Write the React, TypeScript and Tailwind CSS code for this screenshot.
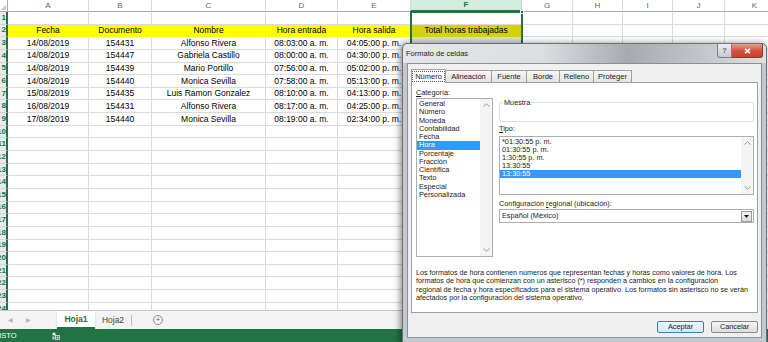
import React from "react";

const COLS = ["A", "B", "C", "D", "E", "F", "G", "H", "I", "J", "K"];

const HEAD = ["Fecha", "Documento", "Nombre", "Hora entrada", "Hora salida", "Total horas trabajadas"];

const DATA = [
  ["14/08/2019", "154431", "Alfonso Rivera", "08:03:00 a. m.", "04:05:00 p. m."],
  ["14/08/2019", "154447", "Gabriela Castillo", "08:00:00 a. m.", "04:30:00 p. m."],
  ["14/08/2019", "154439", "Mario Portillo", "07:56:00 a. m.", "05:02:00 p. m."],
  ["14/08/2019", "154440", "Monica Sevilla", "07:58:00 a. m.", "05:13:00 p. m."],
  ["15/08/2019", "154435", "Luis Ramon Gonzalez", "08:10:00 a. m.", "04:13:00 p. m."],
  ["16/08/2019", "154431", "Alfonso Rivera", "08:17:00 a. m.", "04:25:00 p. m."],
  ["17/08/2019", "154440", "Monica Sevilla", "08:19:00 a. m.", "02:34:00 p. m."],
];

const CATS = [
  "General",
  "Número",
  "Moneda",
  "Contabilidad",
  "Fecha",
  "Hora",
  "Porcentaje",
  "Fracción",
  "Científica",
  "Texto",
  "Especial",
  "Personalizada",
];

const TIPOS = ["*01:30:55 p. m.", "01:30:55 p. m.", "1:30:55 p. m.", "13:30:55", "13:30:55"];

const TABS = [
  { label: "Número", w: "w-[35px]" },
  { label: "Alineación", w: "w-[47px]" },
  { label: "Fuente", w: "w-[36px]" },
  { label: "Borde", w: "w-[34px]" },
  { label: "Relleno", w: "w-[35px]" },
  { label: "Proteger", w: "w-[39px]" },
];

const DESC = [
  "Los formatos de hora contienen números que representan fechas y horas como valores de hora. Los",
  "formatos de hora que comienzan con un asterisco (*) responden a cambios en la configuración",
  "regional de fecha y hora especificados para el sistema operativo. Los formatos sin asterisco no se verán",
  "afectados por la configuración del sistema operativo.",
];

const ROWS = Array.from({ length: 24 }, (_, i) => i + 1);

function cellText(row: number, col: number) {
  if (row === 2 && col <= 5) return HEAD[col];
  if (row >= 3 && row <= 9 && col <= 4) return DATA[row - 3][col];
  return "";
}

function cellClass(row: number, col: number) {
  if (row === 2 && col <= 4) return "bg-[#ffff00] border-[#ffff00]";
  if (row === 2 && col === 5) return "bg-[#d4d20e] border-[#d4d20e]";
  if (col === 5 && row >= 3) return "bg-[#dcdcdc] border-[#cdcdcd]";
  return "bg-white border-[#dadada]";
}

function UpArrow() {
  return (
    <svg width="7" height="4" viewBox="0 0 7 4">
      <path d="M0.5 3.5 L3.5 0.8 L6.5 3.5" stroke="#9a9a9a" strokeWidth="1" fill="none" />
    </svg>
  );
}

function DownArrow() {
  return (
    <svg width="7" height="4" viewBox="0 0 7 4">
      <path d="M0.5 0.5 L3.5 3.2 L6.5 0.5" stroke="#9a9a9a" strokeWidth="1" fill="none" />
    </svg>
  );
}

function Scrollbar() {
  return (
    <div className="w-[12px] bg-[#f4f4f4] flex flex-col items-center justify-between py-[4px]">
      <UpArrow />
      <DownArrow />
    </div>
  );
}

function Sheet() {
  return (
    <div className="relative flex-1 overflow-hidden bg-white">
      <div className="grid grid-cols-[8px_81px_63px_114px_72px_73px_111px_51px_50px_50px_52px_60px] grid-rows-[12px_repeat(24,12.65px)]">
        <div className="relative border-r border-b border-[#ababab] bg-white">
          <div className="absolute right-[1px] bottom-[1px] w-0 h-0 border-l-[5px] border-l-transparent border-b-[5px] border-b-[#c8c8c8]" />
        </div>
        {COLS.map((c, i) =>
          i === 5 ? (
            <div
              key={c}
              className="flex items-center justify-center bg-[#d3eddc] border-b-2 border-b-[#217346] border-r border-r-[#c8c8c8] text-[8px] text-[#217346] font-bold"
            >
              {c}
            </div>
          ) : (
            <div
              key={c}
              className="flex items-center justify-center bg-white border-b border-b-[#ababab] border-r border-r-[#dadada] text-[8px] text-[#666]"
            >
              {c}
            </div>
          )
        )}
        {ROWS.map((r) => (
          <React.Fragment key={r}>
            <div className="flex items-center justify-end overflow-hidden bg-[#eaeaea] border-r-2 border-r-[#217346] border-b border-b-[#d4d4d4] text-[8px] font-bold text-[#217346] leading-none">
              {r}
            </div>
            {COLS.map((c, ci) => (
              <div
                key={c}
                className={`flex items-center justify-center whitespace-nowrap border-r border-b text-[8.5px] leading-none text-black ${cellClass(r, ci)}`}
              >
                {cellText(r, ci)}
              </div>
            ))}
          </React.Fragment>
        ))}
      </div>
      <div className="absolute left-[410px] top-[11px] w-[113px] h-[320px] border-2 border-[#217346] pointer-events-none" />
      <div className="absolute left-[520px] top-[10px] w-[4px] h-[4px] bg-[#217346] border border-white" />
    </div>
  );
}

function SheetTabs() {
  return (
    <div className="h-[19px] flex items-stretch bg-[#f3f3f3] border-t border-[#c6c6c6]">
      <div className="w-[57px] flex items-center gap-[13px] pl-[8px] text-[6px] text-[#b5b5b5]">
        <span>◀</span>
        <span>▶</span>
      </div>
      <div className="w-[38px] flex items-center justify-center bg-white border-b-2 border-[#217346] text-[8.5px] font-bold text-[#217346] shadow-[0_1px_2px_rgba(0,0,0,0.2)]">
        Hoja1
      </div>
      <div className="w-[37px] flex items-center justify-center text-[8.5px] text-[#444]">
        <span className="flex-1 text-center">Hoja2</span>
        <span className="w-px h-[11px] bg-[#bdbdbd]" />
      </div>
      <div className="flex items-center pl-[21px]">
        <div className="w-[10px] h-[10px] rounded-full border border-[#8a8a8a] flex items-center justify-center text-[8px] leading-none text-[#6a6a6a]">
          +
        </div>
      </div>
    </div>
  );
}

function StatusBar() {
  return (
    <div className="h-[13px] flex items-center bg-[#217346] text-white text-[7.5px] overflow-hidden">
      <span className="-ml-[5px] w-[57px]">LISTO</span>
      <svg width="8" height="8" viewBox="0 0 8 8">
        <circle cx="2" cy="2" r="1.6" fill="#ffffff" />
        <rect x="3.5" y="3.5" width="4" height="4" fill="none" stroke="#e6e6e6" strokeWidth="0.8" />
        <path d="M5.5 3.5 V7.5 M3.5 5.5 H7.5" stroke="#e6e6e6" strokeWidth="0.6" />
        <rect x="0.5" y="4.5" width="2" height="3" fill="#cfcfcf" />
      </svg>
    </div>
  );
}

function Dialog() {
  return (
    <div className="absolute left-[402px] top-[43px] w-[365px] h-[300px] flex flex-col rounded-t-[5px] border border-[#6d7075] bg-[#c4c9cf] shadow-[-2px_0_6px_rgba(0,0,0,0.45)]">
      <div className="h-[19px] flex items-start rounded-t-[5px] bg-[linear-gradient(90deg,#e4e6e8_0%,#dcdfe2_38%,#a7abb0_62%,#bfc3c7_80%,#dfe1e3_100%)]">
        <span className="pl-[3px] pt-[6px] text-[7.5px] leading-none text-[#1e1e1e]">Formato de celdas</span>
        <div className="ml-auto mr-[3px] flex">
          <div className="w-[15px] h-[14px] flex items-center justify-center rounded-bl-[3px] border border-t-0 border-[#7d8187] bg-[linear-gradient(#eceef0,#c6cacf)] text-[8px] font-bold text-[#6a6e73]">
            ?
          </div>
          <div className="w-[31px] h-[14px] flex items-center justify-center rounded-br-[3px] border border-t-0 border-l-0 border-[#8a3a30] bg-[linear-gradient(#e6a193,#d2543f_50%,#c7412c)]">
            <svg width="7" height="6" viewBox="0 0 7 6">
              <path d="M1 0.8 L6 5.2 M6 0.8 L1 5.2" stroke="#ffffff" strokeWidth="1.6" />
            </svg>
          </div>
        </div>
      </div>
      <div className="flex-1 mx-[4px] mb-[4px] bg-[#f0f0f0] border border-[#8b9097] px-[3px] pt-[5px] text-[7.3px] leading-none text-[#1a1a1a]">
        <div className="relative z-10 flex items-end h-[13px]">
          {TABS.map((t, i) =>
            i === 0 ? (
              <div
                key={t.label}
                className={`${t.w} h-[14px] -mb-px flex items-center justify-center bg-white border border-b-0 border-[#a0a0a0] text-[7.5px]`}
              >
                <span className="px-[2px] py-[1px] border border-dotted border-[#555]">{t.label}</span>
              </div>
            ) : (
              <div
                key={t.label}
                className={`${t.w} h-[12px] -ml-px flex items-center justify-center bg-[linear-gradient(#f6f6f6,#e3e3e3)] border border-b-0 border-[#a0a0a0] text-[7.5px]`}
              >
                {t.label}
              </div>
            )
          )}
        </div>
        <div className="h-[231px] bg-white border border-[#a0a0a0] pl-[4px] pt-[5px]">
          <div className="flex h-[169px]">
            <div className="w-[77px] flex flex-col">
              <div className="h-[10px] leading-[9px]">
                <u>C</u>ategoría:
              </div>
              <div className="h-[159px] flex border border-[#abadb3] bg-white">
                <div className="flex-1 pt-px">
                  {CATS.map((c) => (
                    <div
                      key={c}
                      className={`h-[8.27px] leading-[8.27px] pl-[2px] whitespace-nowrap ${c === "Hora" ? "bg-[#3399ff] text-white" : ""}`}
                    >
                      {c}
                    </div>
                  ))}
                </div>
                <Scrollbar />
              </div>
            </div>
            <div className="ml-[6px] w-[255px] flex flex-col">
              <fieldset className="mt-[10px] h-[24px] border border-[#d5dfe5] rounded-[3px] px-[3px]">
                <legend className="px-[1px] leading-[9px] text-[#1a1a1a]">Muestra</legend>
              </fieldset>
              <div className="mt-[2px] h-[9px] leading-[9px]">
                <u>T</u>ipo:
              </div>
              <div className="mt-[3px] h-[59px] flex border border-[#abadb3] bg-white">
                <div className="flex-1 pt-px">
                  {TIPOS.map((t, i) => (
                    <div
                      key={i}
                      className={`h-[8px] leading-[8px] pl-[2px] whitespace-nowrap ${i === 4 ? "bg-[#3399ff] text-white" : ""}`}
                    >
                      {t}
                    </div>
                  ))}
                </div>
                <Scrollbar />
              </div>
              <div className="mt-[4px] h-[9px] leading-[9px]">
                Configuración <u>r</u>egional (ubicación):
              </div>
              <div className="mt-px h-[14px] flex items-center border border-[#abadb3] bg-white pl-[2px] pr-px">
                <span className="flex-1">Español (México)</span>
                <div className="w-[11px] h-[11px] flex items-center justify-center border border-[#9a9a9a] bg-[linear-gradient(#f4f4f4,#dcdcdc)]">
                  <svg width="5" height="3" viewBox="0 0 5 3">
                    <path d="M0 0 H5 L2.5 3 Z" fill="#111" />
                  </svg>
                </div>
              </div>
            </div>
          </div>
          <div className="mt-[12px] text-[7.2px] leading-[8.27px]">
            {DESC.map((l) => (
              <div key={l} className="whitespace-nowrap">
                {l}
              </div>
            ))}
          </div>
        </div>
        <div className="mt-[8px] flex justify-end gap-[7px]">
          <div className="w-[47px] h-[12px] flex items-center justify-center rounded-[2px] border border-[#3c7fb1] bg-[linear-gradient(#f2f8fc,#d5e6f3)]">
            Aceptar
          </div>
          <div className="w-[47px] h-[12px] flex items-center justify-center rounded-[2px] border border-[#8a8a8a] bg-[linear-gradient(#f4f4f4,#dedede)]">
            Cancelar
          </div>
        </div>
      </div>
    </div>
  );
}

export default function App() {
  return (
    <div className="relative w-[768px] h-[342px] overflow-hidden flex flex-col bg-white font-['Liberation_Sans',Arial,sans-serif]">
      <Sheet />
      <SheetTabs />
      <StatusBar />
      <Dialog />
    </div>
  );
}
